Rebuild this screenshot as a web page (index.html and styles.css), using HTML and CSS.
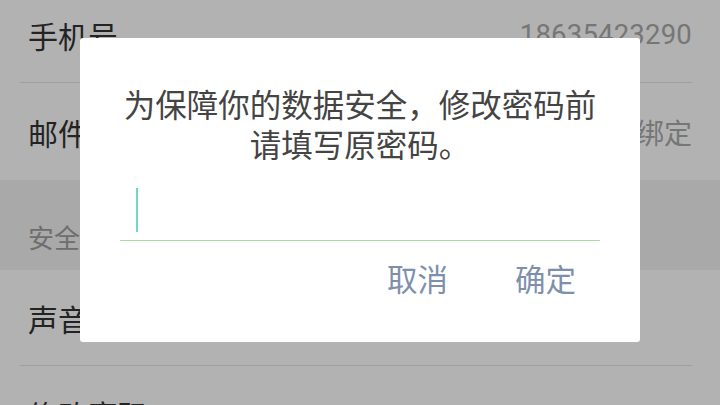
FILE: index.html
```html
<!DOCTYPE html>
<html lang="zh-CN">
<head>
    <meta charset="UTF-8">
    <title>账号与安全</title>
    <link rel="stylesheet" href="styles.css">
</head>
<body>
    <div class="settings">
        <div class="row">
            <span class="label">手机号</span>
            <span class="value num">18635423290</span>
        </div>
        <div class="row">
            <span class="label">邮件</span>
            <span class="value">未绑定</span>
        </div>
        <div class="section">安全</div>
        <div class="row">
            <span class="label">声音</span>
        </div>
        <div class="row">
            <span class="label">修改密码</span>
        </div>
    </div>

    <div class="mask">
        <div class="dialog">
            <p class="dialog-msg">为保障你的数据安全，修改密码前<br>请填写原密码。</p>
            <div class="dialog-input">
                <span class="caret"></span>
            </div>
            <div class="dialog-actions">
                <span class="btn">取消</span>
                <span class="btn">确定</span>
            </div>
        </div>
    </div>
</body>
</html>
```

FILE: styles.css
```css
/* settings page behind a modal password prompt */
html, body {
    margin: 0;
    height: 100%;
    overflow: hidden;
}
body {
    background-color: #ffffff;
    font-family: "Noto Sans CJK SC", "Noto Sans", sans-serif;
}
div.settings {
    margin-top: -13px;
}
div.row {
    display: flex;
    align-items: center;
    justify-content: space-between;
    height: 96px;
    margin: 0 28px 0 20px;
    padding-left: 8px;
    border-bottom: 1px solid #e5e5e5;
    box-sizing: border-box;
}
div.row:nth-child(2) {
    border-bottom: none;
    height: 97px;
}
div.row .label {
    font-size: 30px;
    color: #333333;
}
div.row .value {
    font-size: 28px;
    color: #aaaaaa;
}
div.row .value.num {
    font-family: Roboto, "Noto Sans", sans-serif;
    font-size: 27.5px;
    letter-spacing: 0.2px;
}
div.section {
    display: flex;
    align-items: flex-end;
    height: 90px;
    padding: 0 0 15px 28px;
    box-sizing: border-box;
    background-color: #f2f2f2;
    font-size: 26px;
    color: #9e9e9e;
}
div.mask {
    position: fixed;
    top: 0;
    left: 0;
    right: 0;
    bottom: 0;
    background-color: rgba(0, 0, 0, 0.3);
}
div.dialog {
    position: absolute;
    left: 80px;
    top: 38px;
    width: 560px;
    height: 304px;
    padding: 45px 40px 0;
    box-sizing: border-box;
    background-color: #ffffff;
    border-radius: 3px;
}
p.dialog-msg {
    margin: 0;
    text-align: center;
    font-size: 31.5px;
    line-height: 40px;
    color: #444444;
}
div.dialog-input {
    display: flex;
    align-items: flex-start;
    height: 59px;
    margin-top: 19px;
    padding: 6px 0 0 16px;
    box-sizing: border-box;
    border-bottom: 1px solid #a8dca0;
}
span.caret {
    width: 2px;
    height: 44px;
    background-color: #72d6c9;
}
div.dialog-actions {
    display: flex;
    justify-content: flex-end;
    gap: 67px;
    margin-top: 17px;
    padding-right: 24px;
}
span.btn {
    font-size: 30.5px;
    line-height: 40px;
    color: #7e8fab;
}
```
